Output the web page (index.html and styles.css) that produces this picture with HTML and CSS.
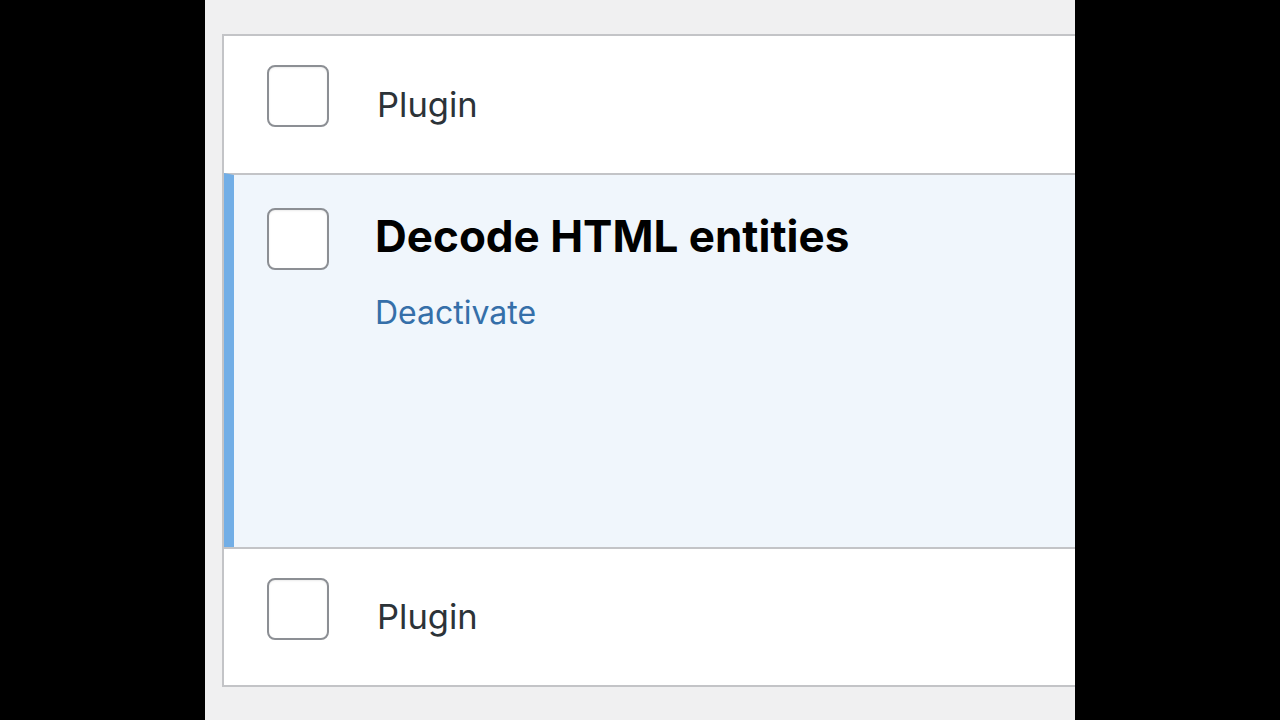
FILE: index.html
```html
<!DOCTYPE html>
<html lang="en">
<head>
<meta charset="utf-8">
<title>Plugins</title>
<link rel="stylesheet" href="styles.css">
</head>
<body>
<div class="stage">
  <div class="screen">
    <div class="table">
      <div class="row">
        <div class="cb-cell"><span class="checkbox"></span></div>
        <div class="name-cell"><span class="col-label">Plugin</span></div>
      </div>
      <div class="row active">
        <div class="cb-cell"><span class="checkbox"></span></div>
        <div class="name-cell">
          <div class="plugin-title">Decode HTML entities</div>
          <a class="row-action" href="#">Deactivate</a>
        </div>
      </div>
      <div class="row foot">
        <div class="cb-cell"><span class="checkbox"></span></div>
        <div class="name-cell"><span class="col-label">Plugin</span></div>
      </div>
    </div>
  </div>
</div>
</body>
</html>
```
FILE: styles.css
```css
html, body {
  margin: 0;
  padding: 0;
  background: #000;
}
body {
  font-family: Inter, "Noto Sans", "Liberation Sans", sans-serif;
}
.stage {
  width: 1280px;
  height: 720px;
  display: flex;
  justify-content: flex-start;
}
.screen {
  margin-left: 205px;
  width: 870px;
  height: 720px;
  background: #f0f0f1;
  overflow: hidden;
  padding: 34px 0 0 17px;
  box-sizing: border-box;
}
.table {
  width: 900px;
  border: 2px solid #c3c4c7;
  background: #fff;
}
.row {
  display: flex;
  align-items: flex-start;
  height: 137px;
  box-sizing: border-box;
}
.row + .row {
  border-top: 2px solid #c3c4c7;
}
.row.active {
  height: 374px;
  background: #f0f6fc;
  border-left: 10px solid #72aee6;
}
.row.foot {
  height: 138px;
}
.cb-cell {
  padding: 29px 0 0 43px;
}
.row.active .cb-cell {
  padding: 33px 0 0 33px;
}
.checkbox {
  display: block;
  width: 62px;
  height: 62px;
  box-sizing: border-box;
  border: 2px solid #8c8f94;
  border-radius: 8px;
  background: #fff;
  box-shadow: inset 0 1px 2px rgba(0,0,0,0.08);
}
.name-cell {
  padding: 49px 0 0 48px;
}
.row.foot .name-cell {
  padding-top: 48px;
}
.col-label {
  display: block;
  font-size: 34.5px;
  line-height: 40px;
  color: #2c3338;
}
.row.active .name-cell {
  padding: 36px 0 0 46px;
}
.plugin-title {
  font-size: 44px;
  line-height: 50px;
  font-weight: 700;
  color: #000;
}
.row-action {
  display: block;
  margin-top: 34px;
  font-size: 32px;
  line-height: 36px;
  color: #356fa9;
  text-decoration: none;
}
```
